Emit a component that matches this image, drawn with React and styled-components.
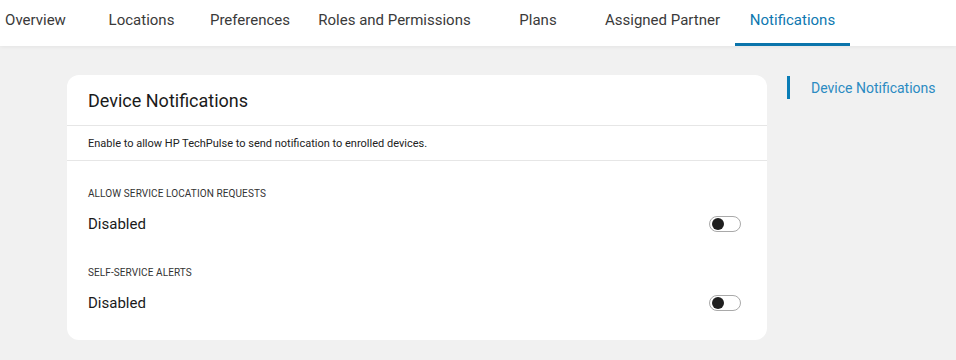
import React from 'react'
import styled, { createGlobalStyle } from 'styled-components'

const GlobalStyle = createGlobalStyle`
body {
  margin: 0;
  background: #f1f1f1;
  font-family: Roboto, "Liberation Sans", sans-serif;
  color: #1d1d1d;
}
`;

const Page = styled.div`
width: 956px;
height: 360px;
overflow: hidden;
background: #f1f1f1;
`;

const TopNav = styled.div`
height: 46px;
background: #fff;
box-shadow: 0 1px 4px rgba(0,0,0,0.06);
overflow: hidden;
`;

const TabList = styled.div`
display: flex;
height: 100%;
margin-left: -15px;
`;

const Tab = styled.div`
width: ${p => p.w}px;
flex: none;
display: flex;
align-items: center;
justify-content: center;
box-sizing: border-box;
padding-bottom: 4px;
font-size: 15px;
color: ${p => p.active ? '#0e78b0' : '#3a3a3a'};
border-bottom: 3px solid ${p => p.active ? '#0a74ab' : 'transparent'};
`;

const Body = styled.div`
display: flex;
align-items: flex-start;
padding: 29px 0 0 67px;
gap: 20px;
`;

const Card = styled.div`
width: 700px;
height: 265px;
background: #fff;
border-radius: 12px;
`;

const CardHeader = styled.div`
height: 50px;
padding: 0 21px;
display: flex;
align-items: center;
border-bottom: 1px solid #e6e6e6;
font-size: 18px;
color: #1a1a1a;
`;

const Description = styled.div`
height: 34px;
padding: 0 21px;
display: flex;
align-items: center;
border-bottom: 1px solid #e6e6e6;
font-size: 11px;
color: #222;
`;

const Settings = styled.div`
padding: 26px 26px 0 21px;
display: flex;
flex-direction: column;
gap: 33px;
`;

const Setting = styled.div`
display: flex;
flex-direction: column;
gap: 14px;
`;

const Label = styled.div`
font-size: 10px;
letter-spacing: 0.1px;
color: #333;
line-height: 14px;
`;

const Row = styled.div`
display: flex;
align-items: center;
justify-content: space-between;
`;

const Value = styled.div`
font-size: 15px;
line-height: 18px;
color: #1a1a1a;
`;

const Toggle = styled.div`
box-sizing: border-box;
width: 32px;
height: 16px;
border: 1px solid #a9a9a9;
border-radius: 9px;
display: flex;
align-items: center;
padding: 0 2px;
`;

const Knob = styled.div`
width: 12px;
height: 12px;
border-radius: 50%;
background: #1f1f1f;
`;

const SideNav = styled.div`
margin-top: 1px;
border-left: 3px solid #0a7db6;
height: 23px;
display: flex;
align-items: center;
padding-left: 21px;
font-size: 14px;
color: #2b8bc2;
`;

const tabs = [
  { label: 'Overview', w: 101 },
  { label: 'Locations', w: 111 },
  { label: 'Preferences', w: 106 },
  { label: 'Roles and Permissions', w: 183 },
  { label: 'Plans', w: 104 },
  { label: 'Assigned Partner', w: 145 },
  { label: 'Notifications', w: 115, active: true },
];

const settings = [
  { label: 'ALLOW SERVICE LOCATION REQUESTS', value: 'Disabled' },
  { label: 'SELF-SERVICE ALERTS', value: 'Disabled' },
];

export default function App() {
  return (
    <Page>
      <GlobalStyle />
      <TopNav>
        <TabList>
          {tabs.map(t => (
            <Tab key={t.label} w={t.w} active={t.active}>{t.label}</Tab>
          ))}
        </TabList>
      </TopNav>
      <Body>
        <Card>
          <CardHeader>Device Notifications</CardHeader>
          <Description>Enable to allow HP TechPulse to send notification to enrolled devices.</Description>
          <Settings>
            {settings.map(s => (
              <Setting key={s.label}>
                <Label>{s.label}</Label>
                <Row>
                  <Value>{s.value}</Value>
                  <Toggle><Knob /></Toggle>
                </Row>
              </Setting>
            ))}
          </Settings>
        </Card>
        <SideNav>Device Notifications</SideNav>
      </Body>
    </Page>
  )
}
